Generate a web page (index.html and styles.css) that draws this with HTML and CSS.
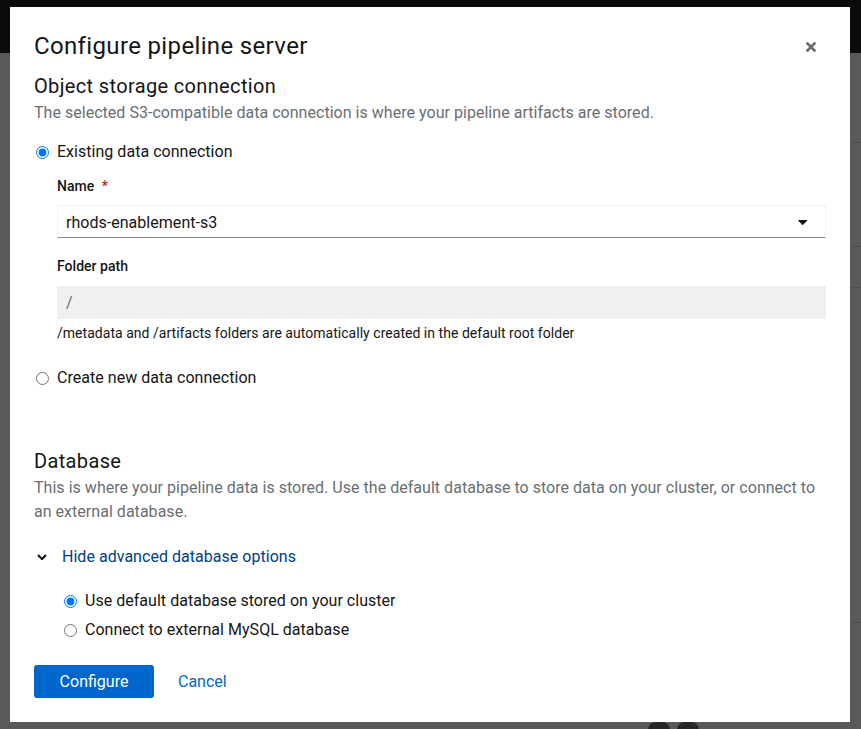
FILE: index.html
```html
<!DOCTYPE html>
<html lang="en">

<head>
    <meta charset="UTF-8">
    <meta name="viewport" content="width=device-width, initial-scale=1.0">
    <title>Configure pipeline server</title>
    <link rel="stylesheet" href="styles.css">
</head>

<body>
    <!-- page behind the backdrop -->
    <div class="masthead"></div>
    <div class="page-rows">
        <div class="page-row row-1"></div>
        <div class="page-row row-2"></div>
        <div class="page-row row-3"></div>
        <div class="page-row row-4"></div>
        <div class="page-empty">
            <svg width="52" height="20" viewBox="0 0 52 20">
                <rect x="0" y="0" width="22" height="30" rx="8" fill="#262626"></rect>
                <rect x="29" y="0" width="22" height="30" rx="8" fill="#262626"></rect>
            </svg>
        </div>
    </div>

    <div class="modal">
        <header class="modal-header">
            <h1 class="modal-title">Configure pipeline server</h1>
            <button class="close-button" aria-label="Close">
                <svg width="10" height="10" viewBox="0 80 352 352">
                    <path fill="currentColor" d="M242.72 256l100.07-100.070c12.28-12.28 12.28-32.19 0-44.48l-22.24-22.24c-12.28-12.28-32.19-12.28-44.48 0L176 189.28 75.93 89.21c-12.28-12.28-32.19-12.28-44.48 0L9.21 111.45c-12.28 12.28-12.28 32.19 0 44.48L109.28 256 9.21 356.07c-12.28 12.28-12.28 32.19 0 44.48l22.24 22.24c12.28 12.28 32.2 12.28 44.48 0L176 322.72l100.07 100.07c12.28 12.28 32.2 12.28 44.48 0l22.24-22.24c12.28-12.28 12.28-32.19 0-44.48L242.72 256z"></path>
                </svg>
            </button>
        </header>

        <div class="modal-body">
            <h2 class="section-title first">Object storage connection</h2>
            <p class="section-desc">The selected S3-compatible data connection is where your pipeline artifacts are stored.</p>

            <label class="radio radio-existing">
                <input type="radio" name="connection" checked>
                <span>Existing data connection</span>
            </label>

            <div class="radio-body">
                <div class="form-label label-name">Name <span class="required">*</span></div>
                <div class="select-toggle">
                    <span>rhods-enablement-s3</span>
                    <svg width="9" height="5" viewBox="4 192 300 170" preserveAspectRatio="none">
                        <path fill="#151515" d="M31.3 192h257.3c17.8 0 26.7 21.5 14.1 34.1L174.1 354.8c-7.8 7.8-20.5 7.8-28.3 0L17.2 226.1C4.6 213.5 13.5 192 31.3 192z"></path>
                    </svg>
                </div>

                <div class="form-label label-folder">Folder path</div>
                <input class="text-input" type="text" placeholder="/" disabled>
                <div class="helper-text">/metadata and /artifacts folders are automatically created in the default root folder</div>
            </div>

            <label class="radio radio-new">
                <input type="radio" name="connection">
                <span>Create new data connection</span>
            </label>

            <h2 class="section-title database">Database</h2>
            <p class="section-desc">This is where your pipeline data is stored. Use the default database to store data on your cluster, or connect to an external database.</p>

            <div class="expand-toggle">
                <svg width="10" height="6" viewBox="0 0 10 6">
                    <path d="M1 1l4 4 4-4" fill="none" stroke="#151515" stroke-width="2.2"></path>
                </svg>
                <span>Hide advanced database options</span>
            </div>

            <div class="db-options">
                <label class="radio">
                    <input type="radio" name="database" checked>
                    <span>Use default database stored on your cluster</span>
                </label>
                <label class="radio radio-external">
                    <input type="radio" name="database">
                    <span>Connect to external MySQL database</span>
                </label>
            </div>
        </div>

        <footer class="modal-footer">
            <button class="btn-primary">Configure</button>
            <button class="btn-link">Cancel</button>
        </footer>
    </div>
</body>

</html>
```
FILE: styles.css
```css
/* Page behind the modal */
body {
    margin: 0;
    background: #595959;
    font-family: Roboto, "Liberation Sans", sans-serif;
    letter-spacing: 0.03px;
    color: #151515;
    overflow: hidden;
}

.masthead {
    height: 53px;
    background: #0b0b0b;
}

.page-rows {
    margin-left: 20px;
}

.page-row {
    border-bottom: 1px solid #4d4d4d;
}

.row-1 { height: 89px; }
.row-2 { height: 103px; }
.row-3 { height: 40px; }
.row-4 { height: 334px; }

.page-empty {
    padding-top: 99px;
    padding-left: 628px;
    line-height: 0;
}

/* Modal */
.modal {
    position: absolute;
    top: 7px;
    left: 10px;
    width: 840px;
    box-sizing: border-box;
    padding: 24px;
    background: #fff;
}

.modal-header {
    display: flex;
    justify-content: space-between;
    align-items: center;
}

.modal-title {
    margin: 0;
    font-size: 24px;
    font-weight: 400;
    line-height: 31px;
    letter-spacing: 0.35px;
}

.close-button {
    display: flex;
    padding: 0;
    margin-right: 10px;
    border: 0;
    background: none;
    color: #6a6e73;
}

.section-title {
    margin: 0;
    font-size: 20px;
    font-weight: 400;
    line-height: 30px;
    letter-spacing: 0.35px;
}

.section-title.first {
    margin-top: 9px;
}

.section-title.database {
    margin-top: 56px;
}

.section-desc {
    margin: 0;
    font-size: 16px;
    line-height: 24px;
    color: #6a6e73;
}

/* Radios */
.radio {
    display: flex;
    align-items: center;
    gap: 8.5px;
    font-size: 16px;
    line-height: 24px;
}

.radio input {
    width: 13px;
    height: 13px;
    margin: 0 0 0 1.5px;
}

.radio-existing {
    margin-top: 15px;
}

.radio-new {
    margin-top: 22px;
}

.radio-body {
    margin-left: 23px;
}

/* Form fields */
.form-label {
    font-size: 14px;
    font-weight: 500;
    line-height: 21px;
}

.label-name {
    margin-top: 12px;
}

.label-folder {
    margin-top: 18px;
}

.required {
    color: #c9190b;
    margin-left: 4px;
}

.select-toggle {
    display: flex;
    justify-content: space-between;
    align-items: center;
    height: 33px;
    margin-top: 8px;
    padding: 1px 18px 0 8px;
    box-sizing: border-box;
    border: 1px solid #f0f0f0;
    border-bottom-color: #8a8d90;
    font-size: 16px;
}

.text-input {
    display: block;
    width: 100%;
    height: 33px;
    margin-top: 9px;
    padding: 0 9px;
    box-sizing: border-box;
    border: 0;
    background: #f0f0f0;
    font-family: inherit;
    font-size: 16px;
}

.text-input::placeholder {
    color: #6a6e73;
}

.helper-text {
    margin-top: 4px;
    font-size: 14px;
    line-height: 21px;
}

/* Expandable section */
.expand-toggle {
    display: flex;
    align-items: center;
    margin-top: 21px;
    font-size: 16px;
    line-height: 24px;
    color: #004080;
}

.expand-toggle svg {
    margin-left: 3px;
    margin-right: 15px;
}

.db-options {
    margin-top: 20px;
    margin-left: 28px;
}

.radio-external {
    margin-top: 5px;
}

/* Footer buttons */
.modal-footer {
    display: flex;
    align-items: center;
    gap: 8px;
    margin-top: 23px;
}

.btn-primary {
    min-width: 120px;
    height: 33px;
    border: 0;
    border-radius: 3px;
    background: #06c;
    color: #fff;
    font-family: inherit;
    font-size: 16px;
}

.btn-link {
    padding: 0 16px;
    height: 33px;
    border: 0;
    background: none;
    color: #06c;
    font-family: inherit;
    font-size: 16px;
}
```
